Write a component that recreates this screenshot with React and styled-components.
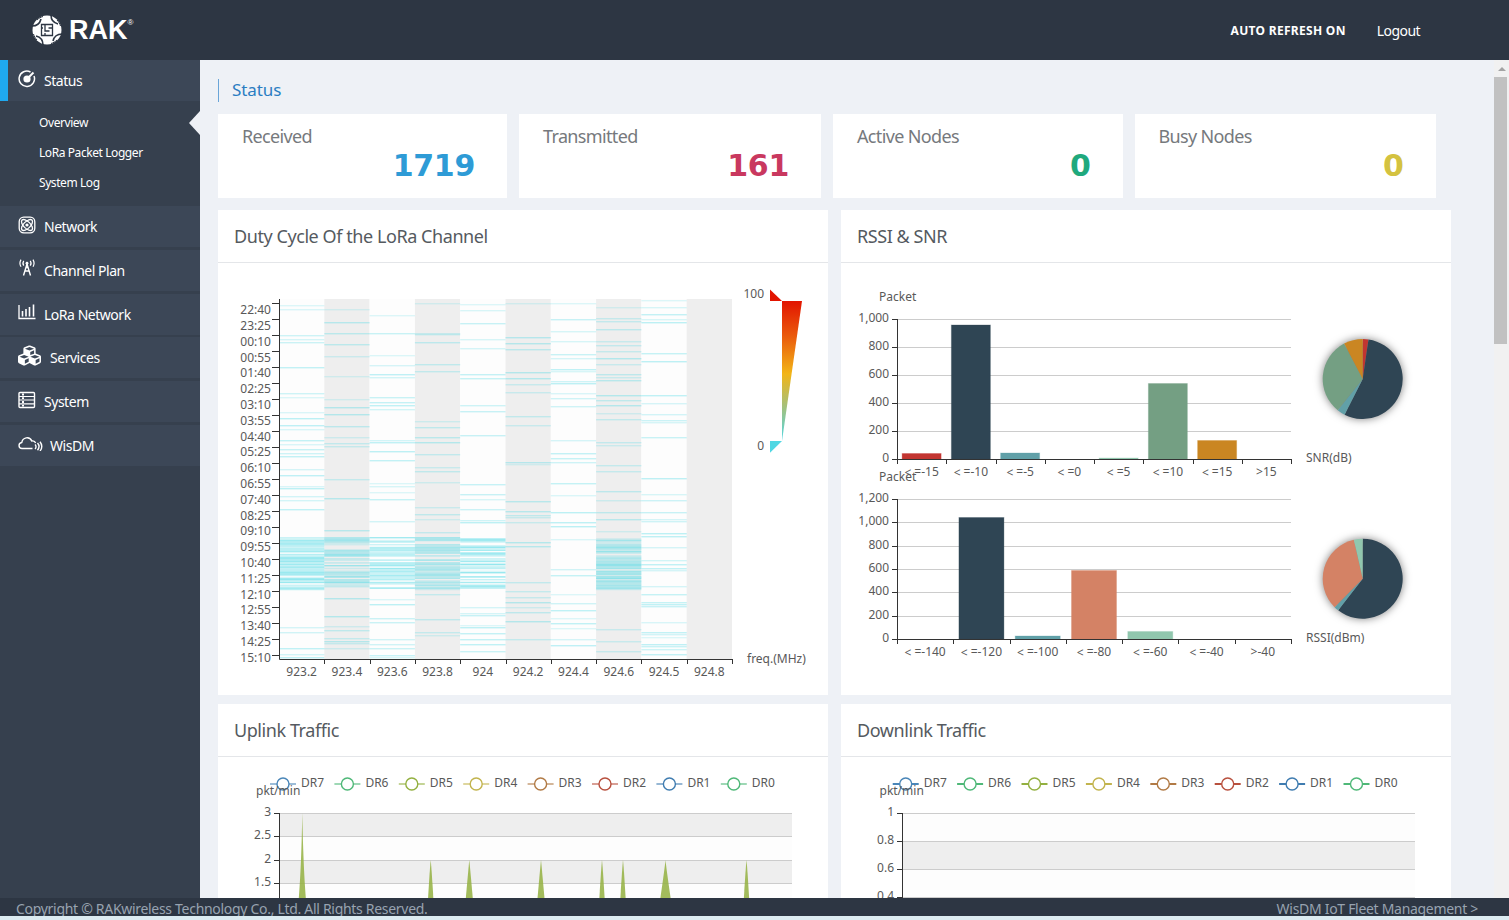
import React from "react";
import styled, { createGlobalStyle } from "styled-components";
import { FaCubes } from "react-icons/fa";

const GlobalStyle = createGlobalStyle`
  html, body { margin: 0; padding: 0; height: 100%; overflow: hidden; }
  body { font-family: "Noto Sans", "Open Sans", sans-serif; background: #dcebf1; }
  * { box-sizing: border-box; }
`;

const Page = styled.div`
  width: 1509px;
  height: 920px;
  display: flex;
  flex-direction: column;
  overflow: hidden;
`;

const Header = styled.header`
  height: 60px;
  flex: none;
  background: #2d3643;
  display: flex;
  align-items: center;
  padding: 0 89px 0 32px;
  color: #fff;
`;

const Logo = styled.div`
  display: flex;
  align-items: center;
  gap: 7px;
  flex: 1;
`;

const LogoText = styled.span`
  font-family: "Liberation Sans", Arial, sans-serif;
  font-weight: 700;
  font-size: 27px;
  line-height: 1;
  margin-left: 0;
  sup { font-size: 8px; font-weight: 400; vertical-align: 14px; line-height: 0; }
`;

const AutoRefresh = styled.span`
  font-size: 12px;
  font-weight: 700;
  letter-spacing: 0.3px;
  margin-right: 31px;
`;

const Logout = styled.a`
  font-size: 14px;
  letter-spacing: -0.55px;
`;

const Body = styled.div`
  flex: none;
  height: 838px;
  display: flex;
  overflow: hidden;
`;

const Sidebar = styled.nav`
  width: 200px;
  flex: none;
  background: #36404e;
  color: #fff;
`;

const NavRow = styled.div`
  height: 41px;
  margin-bottom: ${p => (p.$flush ? "0" : "2.75px")};
  display: flex;
  align-items: center;
  background: #3c4757;
  font-size: 14px;
  letter-spacing: -0.47px;
  border-left: ${p => (p.$active ? "8px solid #1fa9f0" : "none")};
  padding-left: ${p => (p.$active ? "10px" : "18px")};
`;

const NavIcon = styled.span`
  width: ${p => p.$w || 26}px;
  flex: none;
  display: flex;
  align-items: center;
  margin-top: -4px;
`;

const SubList = styled.div`
  padding: 7px 0 8px;
`;

const SubItem = styled.div`
  position: relative;
  height: 30px;
  line-height: 30px;
  padding-left: 39px;
  font-size: 12px;
  letter-spacing: -0.42px;

  ${p =>
    p.$active &&
    `&::after {
      content: "";
      position: absolute;
      right: 0;
      top: 3px;
      border-style: solid;
      border-width: 12px 11px 12px 0;
      border-color: transparent #eef1f6 transparent transparent;
    }`}
`;

const Main = styled.main`
  flex: 1;
  display: flex;
  min-width: 0;
  background: #eef1f6;
`;

const Content = styled.div`
  flex: 1;
  min-width: 0;
  overflow: hidden;
  padding: 19px 43px 0 18px;
`;

const ScrollRail = styled.div`
  width: 15px;
  flex: none;
  background: #f1f1f1;
  display: flex;
  flex-direction: column;
`;

const ScrollArrow = styled.div`
  height: 17px;
  flex: none;
  display: flex;
  justify-content: center;
  padding-top: 7px;
  &::before {
    content: "";
    border-style: solid;
    border-width: 0 4px 4px;
    border-color: transparent transparent #a3a3a3;
    height: 0;
  }
`;

const ScrollThumb = styled.div`
  width: 13px;
  height: 267px;
  background: #c1c1c1;
`;

const PageTitle = styled.h2`
  margin: 0 0 12px;
  height: 23px;
  line-height: 22px;
  border-left: 1px solid #6aa5d8;
  padding-left: 13px;
  font-size: 17px;
  font-weight: 400;
  letter-spacing: -0.1px;
  color: #2a7dc2;
`;

const StatRow = styled.div`
  display: grid;
  grid-template-columns: 289px 302px 289.5px 301px;
  column-gap: 12px;
  margin-bottom: 12px;
`;

const StatCard = styled.div`
  height: 84px;
  background: #fff;
  padding: 9px 32px 0 24px;
  display: flex;
  flex-direction: column;
`;

const StatLabel = styled.div`
  font-size: 18px;
  line-height: 26px;
  letter-spacing: -0.65px;
  color: #76797d;
`;

const StatValue = styled.div`
  font-family: "DejaVu Sans", Verdana, sans-serif;
  font-weight: 700;
  font-size: 30px;
  line-height: 34px;
  letter-spacing: -0.3px;
  text-align: right;
  color: ${p => p.$color};
`;

const PanelGrid = styled.div`
  display: grid;
  grid-template-columns: 610px 610px;
  column-gap: 13px;
  row-gap: 9px;
`;

const Panel = styled.section`
  background: #fff;
  height: ${p => p.$h}px;
  overflow: hidden;
`;

const PanelTitle = styled.h3`
  margin: 0;
  height: 53px;
  line-height: 52px;
  padding-left: 16px;
  border-bottom: 1px solid #e4e6e9;
  font-size: 18px;
  font-weight: 400;
  letter-spacing: -0.43px;
  color: #555a60;
`;

const ChartSvg = styled.svg`
  display: block;
  font-family: "Noto Sans", "Open Sans", sans-serif;
`;

const Label = styled.text`
  font-size: 12px;
  fill: #595959;
  dominant-baseline: central;
  transform: translateY(-1px);
`;

const Comparator = styled.tspan`
  letter-spacing: 3px;
`;

const PieGroup = styled.g`
  filter: drop-shadow(0 0 4px rgba(0, 0, 0, 0.5));
`;

const Footer = styled.footer`
  flex: none;
  height: 18px;
  background: #2d3643;
  color: #98a3b0;
  font-size: 14px;
  line-height: 22px;
  letter-spacing: -0.3px;
  padding: 0 31px 0 16px;
  display: flex;
  justify-content: space-between;
  overflow: hidden;
`;

/* ---------- icons ---------- */

const Swirl = () => (
  <svg width="30" height="30" viewBox="0 0 30 30" fill="none" stroke="#2d3643" strokeWidth="1.3">
    <circle cx="15" cy="15" r="14.5" fill="#fff" stroke="none" />
    <path d="M0 11 C5 11 8 8 9 4 M19 0 C19 5 22 8 26 9 M30 19 C25 19 22 22 21 26 M11 30 C11 25 8 22 4 21" strokeWidth="1.6" />
    <path d="M5 5 C7 3 9 2 11 1.5 M25 5 C27 7 28 9 28.5 11 M25 25 C23 27 21 28 19 28.5 M5 25 C3 23 2 21 1.5 19" strokeWidth="1" />
    <path d="M9.5 9.5 H20.5 V20.5 H9.5 Z" />
    <path d="M13 9.5 V16 H17.5 M20.5 13 H16.5 M13 20.5 V18 M9.5 13 H11" />
  </svg>
);

const StatusIcon = () => (
  <svg width="18" height="18" viewBox="0 0 18 18" fill="none" stroke="#fff">
    <path d="M12.5 2 A7.7 7.7 0 1 0 16 6" strokeWidth="1.5" />
    <circle cx="9" cy="9" r="3.6" fill="#fff" stroke="none" />
    <path d="M10 8 L15.5 2.5" strokeWidth="2" />
  </svg>
);

const NetworkIcon = () => (
  <svg width="18" height="18" viewBox="0 0 18 18" fill="none" stroke="#fff" strokeWidth="1.3">
    <rect x="1.2" y="1.2" width="15.6" height="15.6" rx="4.5" />
    <ellipse cx="9" cy="9" rx="7" ry="3.4" transform="rotate(45 9 9)" />
    <ellipse cx="9" cy="9" rx="7" ry="3.4" transform="rotate(-45 9 9)" />
    <circle cx="9" cy="9" r="1.6" fill="#fff" stroke="none" />
  </svg>
);

const TowerIcon = () => (
  <svg width="18" height="18" viewBox="0 0 18 18" fill="none" stroke="#fff" strokeWidth="1.2">
    <path d="M9 5 L5.5 16.5 M9 5 L12.5 16.5 M6.8 12 H11.2 M7.8 8.5 H10.2" strokeWidth="1.4" />
    <circle cx="9" cy="4.2" r="1.4" fill="#fff" stroke="none" />
    <path d="M5.8 1.8 A4 4 0 0 0 5.8 6.6 M12.2 1.8 A4 4 0 0 1 12.2 6.6" />
    <path d="M3 0.6 A7 7 0 0 0 3 7.8 M15 0.6 A7 7 0 0 1 15 7.8" />
  </svg>
);

const BarsIcon = () => (
  <svg width="18" height="18" viewBox="0 0 18 18" fill="none" stroke="#fff">
    <path d="M1 2 V15.5 H17.5" strokeWidth="1.3" />
    <path d="M4.5 8 V13.5 M8 6 V13.5 M11.5 4 V13.5 M15.5 1.5 V13.5" strokeWidth="1.6" />
  </svg>
);

const SystemIcon = () => (
  <svg width="18" height="18" viewBox="0 0 18 18" fill="none" stroke="#fff">
    <rect x="1" y="1.5" width="15.5" height="15" rx="1" strokeWidth="1.4" />
    <path d="M1 5.5 H16.5 M1 9 H16.5 M1 12.8 H16.5" strokeWidth="1.2" />
    <path d="M4 3.5 H6 M4 7.2 H6 M4 11 H6 M4 14.6 H6" strokeWidth="1.8" />
  </svg>
);

const CloudIcon = () => (
  <svg width="25" height="16" viewBox="0 0 25 16" fill="none" stroke="#fff" strokeWidth="1.4">
    <path d="M14.5 13.5 H4 C0.2 13.5 0 8 3.8 7.5 C4.5 2.5 11.5 0.8 13.8 6 C15.5 5.6 17 6.4 17.6 8" />
    <path d="M17 9.5 A3 3 0 0 1 17 14 M19.5 8 A5.5 5.5 0 0 1 19.5 15.2 M22 6.8 A7.5 7.5 0 0 1 22 16" />
  </svg>
);

/* ---------- heatmap data ---------- */

const random = seed => {
  let s = seed;
  return () => {
    s = (s * 16807) % 2147483647;
    return (s - 1) / 2147483646;
  };
};

const COLUMN_LINES = [
  [305, 309, 335, 339, 342, 367, 393, 397, 412, 418, 425, 429, 440, 444, 449, 453, 456, 469, 475, 486, 488, 496, 500, 509, 627, 632, 648, 654, 657],
  [309, 322, 333, 344, 356, 376, 399, 407, 414, 426, 437, 443, 446, 479, 498, 530, 598, 616, 626, 630, 638, 641, 643, 648],
  [315, 333, 355, 365, 374, 377, 397, 402, 405, 409, 440, 442, 451, 460, 483, 486, 492, 499, 521, 599, 604, 618, 622, 639, 644, 648, 655, 657],
  [303, 333, 334, 342, 364, 371, 421, 427, 437, 442, 454, 467, 471, 482, 507, 514, 519, 532, 594, 619, 632, 635],
  [304, 310, 323, 339, 348, 374, 378, 405, 411, 435, 484, 494, 499, 509, 520, 522, 607, 613, 615, 625, 627, 633, 639, 644, 651],
  [303, 337, 343, 349, 372, 378, 384, 392, 416, 425, 462, 464, 501, 511, 515, 517, 522, 542, 546, 582, 591, 597, 602, 607, 612, 621, 639],
  [303, 319, 331, 341, 354, 358, 369, 371, 381, 383, 393, 398, 406, 440, 453, 458, 462, 483, 495, 512, 522, 526, 539, 569, 575, 594, 603, 610, 618, 623, 628, 639, 645],
  [307, 318, 321, 329, 341, 345, 351, 358, 364, 374, 377, 380, 395, 400, 405, 413, 419, 442, 445, 465, 471, 491, 500, 512, 519, 531, 629, 641, 651],
  [300, 307, 314, 319, 322, 353, 361, 395, 403, 414, 420, 422, 437, 478, 494, 500, 512, 519, 521, 533, 536, 547, 560, 564, 568, 570, 586, 594, 602, 604, 606, 622, 632, 634, 637, 644, 646, 649, 654],
  []
];

const DENSE_COLUMNS = [0, 1, 2, 3, 4, 7];

const heatLines = COLUMN_LINES.map((ys, col) => {
  const rnd = random(col * 97 + 31);
  const lines = ys.map(y => ({ y, alpha: 0.2 + rnd() * 0.2 }));
  if (DENSE_COLUMNS.includes(col)) {
    for (let y = 537; y < 589; y += 1.4) {
      if (rnd() < 0.78) lines.push({ y, alpha: 0.2 + rnd() * 0.45 });
    }
  }
  return lines;
});

const BAND = 45.3;
const HEAT_X = 279;
const TIMES = ["22:40", "23:25", "00:10", "00:55", "01:40", "02:25", "03:10", "03:55", "04:40", "05:25", "06:10", "06:55", "07:40", "08:25", "09:10", "09:55", "10:40", "11:25", "12:10", "12:55", "13:40", "14:25", "15:10"];
const FREQS = ["923.2", "923.4", "923.6", "923.8", "924", "924.2", "924.4", "924.6", "924.5", "924.8"];

const HeatmapChart = () => (
  <ChartSvg width="610" height="432" viewBox="218 263 610 432">
    <defs>
      <linearGradient id="heatScale" x1="0" y1="0" x2="0" y2="1">
        <stop offset="0" stopColor="#e21400" />
        <stop offset="0.25" stopColor="#ea5a0c" />
        <stop offset="0.52" stopColor="#f2b517" />
        <stop offset="0.75" stopColor="#a6c07a" />
        <stop offset="1" stopColor="#50d7e3" />
      </linearGradient>
    </defs>
    {FREQS.map((f, i) => (
      <rect key={f} x={HEAT_X + i * BAND} y="299" width={BAND} height="360" fill={i % 2 ? "#eeeeee" : "#fdfdfd"} />
    ))}
    {heatLines.map((lines, col) =>
      lines.map((l, i) => (
        <rect key={col + "-" + i} x={HEAT_X + col * BAND} y={l.y} width={BAND} height="1.4" fill="#58dbe6" opacity={l.alpha} />
      ))
    )}
    <path d="M279.5 299 V659.5 H732" fill="none" stroke="#333" />
    {TIMES.map((t, i) => (
      <g key={t}>
        <path d={`M272 ${Math.round(303 + i * 16) + 0.5}h7`} stroke="#333" />
        <Label x="271" y={310.6 + i * 15.8} textAnchor="end">{t}</Label>
      </g>
    ))}
    {FREQS.map((f, i) => (
      <g key={f}>
        <path d={`M${Math.round(HEAT_X + (i + 1) * BAND) + 0.5} 659v5`} stroke="#333" />
        <Label x={HEAT_X + (i + 0.5) * BAND} y="672.5" textAnchor="middle">{f}</Label>
      </g>
    ))}
    <Label x="747" y="659">freq.(MHz)</Label>
    <Label x="764" y="294" textAnchor="end">100</Label>
    <Label x="764" y="446" textAnchor="end">0</Label>
    <path d="M770 289.5 V301 H782 Z" fill="#e21400" />
    <path d="M782 301 H802 L782 441 Z" fill="url(#heatScale)" />
    <path d="M770 441 H782 L770 452.7 Z" fill="#50d7e3" />
  </ChartSvg>
);

/* ---------- bars and pies ---------- */

const piePath = (cx, cy, r, from, to) => {
  const pt = a => [cx + r * Math.sin((a * Math.PI) / 180), cy - r * Math.cos((a * Math.PI) / 180)];
  const [x0, y0] = pt(from);
  const [x1, y1] = pt(to);
  return `M${cx} ${cy}L${x0} ${y0}A${r} ${r} 0 ${to - from > 180 ? 1 : 0} 1 ${x1} ${y1}Z`;
};

const Pie = ({ cy, slices }) => (
  <PieGroup>
    {slices.map(s => (
      <path key={s.from} d={piePath(1362.7, cy, 40, s.from, s.to)} fill={s.color} />
    ))}
  </PieGroup>
);

const Category = ({ text }) =>
  text.startsWith("<=") ? (
    <>
      <Comparator>&lt;</Comparator>
      {text.slice(1)}
    </>
  ) : (
    text
  );

const BarGrid = ({ top, bottom, ticks, cats, bars, barWidth, labelY }) => {
  const left = 897;
  const right = 1291;
  const step = (right - left) / cats.length;
  return (
    <g>
      {ticks.map((t, i) => {
        const y = Math.round(bottom - ((bottom - top) * i) / (ticks.length - 1)) + 0.5;
        return (
          <g key={t}>
            {i > 0 && <path d={`M${left} ${y}H${right}`} stroke="#cccccc" />}
            <path d={`M${left - 5} ${y}h5`} stroke="#333" />
            <Label x={left - 8} y={y - 1} textAnchor="end">{t}</Label>
          </g>
        );
      })}
      {bars.map(b => (
        <rect
          key={b.i}
          x={left + b.i * step + (step - barWidth) / 2}
          y={b.top}
          width={barWidth}
          height={bottom - b.top}
          fill={b.color}
          stroke={b.color}
          strokeOpacity="0.3"
        />
      ))}
      <path d={`M${left + 0.5} ${top}V${bottom + 0.5}H${right}`} fill="none" stroke="#333" />
      {cats.map((c, i) => (
        <g key={c}>
          <path d={`M${Math.round(left + (i + 1) * step) + 0.5} ${bottom}v5`} stroke="#333" />
          <Label x={left + (i + 0.5) * step} y={labelY} textAnchor="middle">
            <Category text={c} />
          </Label>
        </g>
      ))}
      <path d={`M${left + 0.5} ${bottom}v5`} stroke="#333" />
    </g>
  );
};

const RssiChart = () => (
  <ChartSvg width="610" height="432" viewBox="841 263 610 432">
    <Label x="879" y="297">Packet</Label>
    <BarGrid
      top={319}
      bottom={459}
      labelY={472.5}
      barWidth={39}
      ticks={["0", "200", "400", "600", "800", "1,000"]}
      cats={["<=-15", "<=-10", "<=-5", "<=0", "<=5", "<=10", "<=15", ">15"]}
      bars={[
        { i: 0, top: 453.5, color: "#c23531" },
        { i: 1, top: 325, color: "#2f4554" },
        { i: 2, top: 453, color: "#61a0a8" },
        { i: 4, top: 458, color: "#91c7ae" },
        { i: 5, top: 383.5, color: "#749f83" },
        { i: 6, top: 440.5, color: "#ca8622" }
      ]}
    />
    <Label x="879" y="477">Packet</Label>
    <BarGrid
      top={499}
      bottom={639}
      labelY={652.5}
      barWidth={45}
      ticks={["0", "200", "400", "600", "800", "1,000", "1,200"]}
      cats={["<=-140", "<=-120", "<=-100", "<=-80", "<=-60", "<=-40", ">-40"]}
      bars={[
        { i: 1, top: 517.5, color: "#2f4554" },
        { i: 2, top: 636, color: "#61a0a8" },
        { i: 3, top: 570.5, color: "#d48265" },
        { i: 4, top: 631.5, color: "#91c7ae" }
      ]}
    />
    <Pie
      cy={379}
      slices={[
        { from: 0, to: 8.3, color: "#c23531" },
        { from: 8.3, to: 207, color: "#2f4554" },
        { from: 207, to: 218.7, color: "#61a0a8" },
        { from: 218.7, to: 332.4, color: "#749f83" },
        { from: 332.4, to: 360, color: "#ca8622" }
      ]}
    />
    <Pie
      cy={578.7}
      slices={[
        { from: 0, to: 217.8, color: "#2f4554" },
        { from: 217.8, to: 224.7, color: "#61a0a8" },
        { from: 224.7, to: 347.2, color: "#d48265" },
        { from: 347.2, to: 360, color: "#91c7ae" }
      ]}
    />
    <Label x="1306" y="458">SNR(dB)</Label>
    <Label x="1306" y="638">RSSI(dBm)</Label>
  </ChartSvg>
);

/* ---------- traffic charts ---------- */

const LEGEND = [
  ["DR7", "#4a86b8"],
  ["DR6", "#4fb878"],
  ["DR5", "#93b040"],
  ["DR4", "#c2b44e"],
  ["DR3", "#b17a45"],
  ["DR2", "#b8503e"],
  ["DR1", "#3f7cb0"],
  ["DR0", "#4fb878"]
];

const Legend = ({ x, lineOpacity }) =>
  LEGEND.map(([name, color], i) => {
    const cx = x + i * 64.4;
    return (
      <g key={name}>
        <path d={`M${cx - 13} 784H${cx + 13}`} stroke={color} strokeWidth="2" strokeOpacity={lineOpacity} />
        <circle cx={cx} cy="784" r="6" fill="#fff" stroke={color} strokeWidth="1.4" />
        <Label x={cx + 18} y="783.5">{name}</Label>
      </g>
    );
  });

const SPIKES = [
  [302.3, 813, 4],
  [430.7, 860, 3],
  [469.3, 860, 4],
  [541, 860, 4],
  [602, 860, 3],
  [623, 860, 3],
  [665.5, 860, 6],
  [746.5, 860, 3]
];

const UplinkChart = () => (
  <ChartSvg width="610" height="160" viewBox="218 757 610 160">
    <rect x="280" y="813" width="512" height="23.5" fill="#eeeeee" />
    <rect x="280" y="836.5" width="512" height="23.5" fill="#fdfdfd" />
    <rect x="280" y="860" width="512" height="23.5" fill="#eeeeee" />
    <rect x="280" y="883.5" width="512" height="23.5" fill="#fdfdfd" />
    {[813, 836, 860, 883].map((y, i) => (
      <g key={y}>
        <path d={`M279 ${y + 0.5}H792`} stroke="#cccccc" />
        <path d={`M274 ${y + 0.5}h5`} stroke="#333" />
        <Label x="271" y={y - 1} textAnchor="end">{["3", "2.5", "2", "1.5"][i]}</Label>
      </g>
    ))}
    {SPIKES.map(([x, top, w]) => (
      <path key={x} d={`M${x - w} 904Q${x - 1} 870 ${x} ${top}Q${x + 1} 870 ${x + w} 904Z`} fill="#93b040" fillOpacity="0.85" />
    ))}
    <path d="M279.5 813V910" stroke="#333" />
    <Legend x={283} lineOpacity={0.55} />
    <Label x="256" y="791">pkt/min</Label>
  </ChartSvg>
);

const DownlinkChart = () => (
  <ChartSvg width="610" height="160" viewBox="841 757 610 160">
    <rect x="903" y="813" width="512" height="28" fill="#fdfdfd" />
    <rect x="903" y="841" width="512" height="28" fill="#eeeeee" />
    <rect x="903" y="869" width="512" height="28" fill="#fdfdfd" />
    {[813, 841, 869, 897].map((y, i) => (
      <g key={y}>
        <path d={`M902 ${y + 0.5}H1415`} stroke="#cccccc" />
        <path d={`M897 ${y + 0.5}h5`} stroke="#333" />
        <Label x="894" y={y - 1} textAnchor="end">{["1", "0.8", "0.6", "0.4"][i]}</Label>
      </g>
    ))}
    <path d="M902.5 813V910" stroke="#333" />
    <Legend x={905.7} lineOpacity={1} />
    <Label x="879.5" y="791">pkt/min</Label>
  </ChartSvg>
);

const NAV = [
  ["Network", <NetworkIcon />, 26],
  ["Channel Plan", <TowerIcon />, 26],
  ["LoRa Network", <BarsIcon />, 26],
  ["Services", <FaCubes size={23} color="#fff" />, 32],
  ["System", <SystemIcon />, 26],
  ["WisDM", <CloudIcon />, 32]
];

const STATS = [
  ["Received", "1719", "#2e9bd6"],
  ["Transmitted", "161", "#c9385f"],
  ["Active Nodes", "0", "#1fa97d"],
  ["Busy Nodes", "0", "#d4c240"]
];

export default function App() {
  return (
    <Page>
      <GlobalStyle />
      <Header>
        <Logo>
          <Swirl />
          <LogoText>RAK<sup>®</sup></LogoText>
        </Logo>
        <AutoRefresh>AUTO REFRESH ON</AutoRefresh>
        <Logout>Logout</Logout>
      </Header>
      <Body>
        <Sidebar>
          <NavRow $active $flush>
            <NavIcon><StatusIcon /></NavIcon>
            Status
          </NavRow>
          <SubList>
            <SubItem $active>Overview</SubItem>
            <SubItem>LoRa Packet Logger</SubItem>
            <SubItem>System Log</SubItem>
          </SubList>
          {NAV.map(([name, icon, w]) => (
            <NavRow key={name}>
              <NavIcon $w={w}>{icon}</NavIcon>
              {name}
            </NavRow>
          ))}
        </Sidebar>
        <Main>
          <Content>
            <PageTitle>Status</PageTitle>
            <StatRow>
              {STATS.map(([label, value, color]) => (
                <StatCard key={label}>
                  <StatLabel>{label}</StatLabel>
                  <StatValue $color={color}>{value}</StatValue>
                </StatCard>
              ))}
            </StatRow>
            <PanelGrid>
              <Panel $h={485}>
                <PanelTitle>Duty Cycle Of the LoRa Channel</PanelTitle>
                <HeatmapChart />
              </Panel>
              <Panel $h={485}>
                <PanelTitle>RSSI &amp; SNR</PanelTitle>
                <RssiChart />
              </Panel>
              <Panel $h={320}>
                <PanelTitle>Uplink Traffic</PanelTitle>
                <UplinkChart />
              </Panel>
              <Panel $h={320}>
                <PanelTitle>Downlink Traffic</PanelTitle>
                <DownlinkChart />
              </Panel>
            </PanelGrid>
          </Content>
          <ScrollRail>
            <ScrollArrow />
            <ScrollThumb />
          </ScrollRail>
        </Main>
      </Body>
      <Footer>
        <span>Copyright © RAKwireless Technology Co., Ltd. All Rights Reserved.</span>
        <span>WisDM IoT Fleet Management &gt;</span>
      </Footer>
    </Page>
  );
}
